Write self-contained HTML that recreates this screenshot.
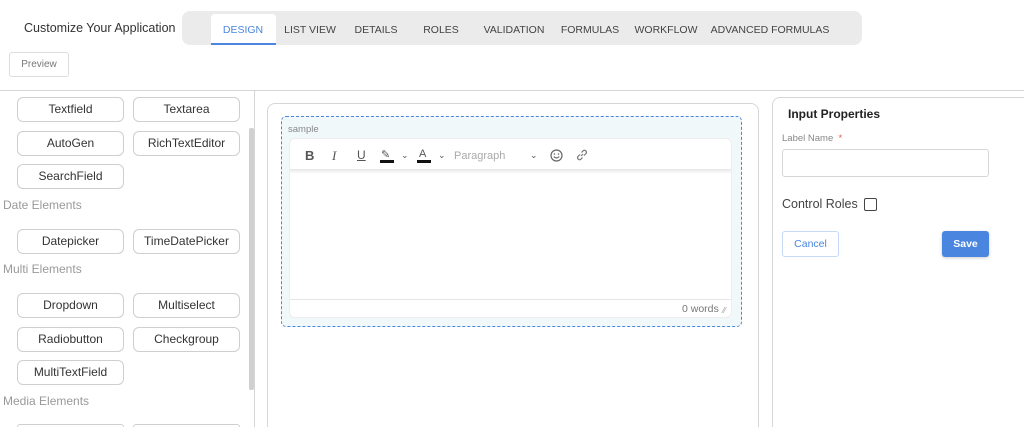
<!DOCTYPE html>
<html><head><style>
*{box-sizing:border-box;margin:0;padding:0}
html,body{width:1024px;height:427px;overflow:hidden}
body{background:#fff;font-family:"Liberation Sans",sans-serif;color:#333;position:relative}
.a{position:absolute}
.tab{position:absolute;top:24px;font-size:10.5px;color:#444;transform:translateX(-50%);white-space:nowrap}
.btn{position:absolute;width:107px;height:25px;border:1px solid #cfcfcf;border-radius:6px;font-size:12px;color:#333;text-align:center;line-height:23px;background:#fff}
.sec{position:absolute;left:3px;font-size:12px;color:#999}
.ic{position:absolute;top:148px;font-size:13px;color:#555}
</style></head><body>
<div class="a" style="left:24px;top:21px;font-size:12.5px;color:#333">Customize Your Application</div>
<div class="a" style="left:182px;top:11px;width:680px;height:34px;background:#ebebeb;border-radius:8px"></div>
<div class="a" style="left:211px;top:14px;width:65px;height:31px;background:#fff;border-radius:4px 4px 0 0;border-bottom:2px solid #4a86e0"></div>
<div class="tab" style="left:243px;color:#4a86e0">DESIGN</div>
<div class="tab" style="left:310px">LIST VIEW</div>
<div class="tab" style="left:376px">DETAILS</div>
<div class="tab" style="left:441px">ROLES</div>
<div class="tab" style="left:514px">VALIDATION</div>
<div class="tab" style="left:590px">FORMULAS</div>
<div class="tab" style="left:666px">WORKFLOW</div>
<div class="tab" style="left:770px">ADVANCED FORMULAS</div>
<div class="a" style="left:9px;top:52px;width:60px;height:25px;border:1px solid #ddd;border-radius:3px;font-size:10px;color:#777;text-align:center;line-height:23px">Preview</div>
<div class="a" style="left:0;top:90px;width:1024px;height:1px;background:#d6d6d6"></div>
<div class="a" style="left:254px;top:91px;width:1px;height:336px;background:#d6d6d6"></div>
<div class="a" style="left:249px;top:128px;width:5px;height:262px;background:#d0d0d0;border-radius:2px"></div>

<div class="btn" style="left:17px;top:97px">Textfield</div>
<div class="btn" style="left:133px;top:97px">Textarea</div>
<div class="btn" style="left:17px;top:131px">AutoGen</div>
<div class="btn" style="left:133px;top:131px">RichTextEditor</div>
<div class="btn" style="left:17px;top:164px">SearchField</div>
<div class="sec" style="top:198px">Date Elements</div>
<div class="btn" style="left:17px;top:229px">Datepicker</div>
<div class="btn" style="left:133px;top:229px">TimeDatePicker</div>
<div class="sec" style="top:262px">Multi Elements</div>
<div class="btn" style="left:17px;top:293px">Dropdown</div>
<div class="btn" style="left:133px;top:293px">Multiselect</div>
<div class="btn" style="left:17px;top:327px">Radiobutton</div>
<div class="btn" style="left:133px;top:327px">Checkgroup</div>
<div class="btn" style="left:17px;top:360px">MultiTextField</div>
<div class="sec" style="top:394px">Media Elements</div>
<div class="a" style="left:17px;top:424px;width:107px;height:3px;border:1px solid #cfcfcf;border-bottom:none;border-radius:6px 6px 0 0"></div>
<div class="a" style="left:133px;top:424px;width:107px;height:3px;border:1px solid #cfcfcf;border-bottom:none;border-radius:6px 6px 0 0"></div>

<div class="a" style="left:267px;top:103px;width:492px;height:324px;border:1px solid #d6d6d6;border-bottom:none;border-radius:8px 8px 0 0"></div>
<div class="a" style="left:281px;top:116px;width:461px;height:211px;border:1px dashed #4a86e0;border-radius:5px;background:#f1f8fa"></div>
<div class="a" style="left:288px;top:124px;font-size:9.5px;color:#888">sample</div>
<div class="a" style="left:289px;top:138px;width:443px;height:180px;background:#fff;border-radius:6px;border:1px solid #eee"></div>
<div class="a" style="left:290px;top:169px;width:441px;height:5px;background:linear-gradient(#e6e6e6,#fff)"></div>
<div class="a" style="left:290px;top:299px;width:441px;height:1px;background:#e6e6e6"></div>
<div class="ic" style="left:305px;font-weight:bold">B</div>
<div class="ic" style="left:332px;font-family:'Liberation Serif',serif;font-style:italic">I</div>
<div class="ic" style="left:357px;text-decoration:underline;font-size:12px">U</div>
<div class="a" style="left:381px;top:148px;font-size:11px;color:#555">✎</div>
<div class="a" style="left:380px;top:160px;width:14px;height:3px;background:#111"></div>
<div class="ic" style="left:401px;font-size:9px;top:150px">⌄</div>
<div class="ic" style="left:419px;font-size:11px;">A</div>
<div class="a" style="left:417px;top:160px;width:14px;height:3px;background:#111"></div>
<div class="ic" style="left:438px;font-size:9px;top:150px">⌄</div>
<div class="a" style="left:454px;top:150px;font-size:11px;color:#aaa">Paragraph</div>
<div class="ic" style="left:530px;font-size:9px;top:150px">⌄</div>
<svg class="a" style="left:550px;top:149px" width="13" height="13" viewBox="0 0 13 13"><circle cx="6.5" cy="6.5" r="5.5" fill="none" stroke="#666" stroke-width="1.2"/><circle cx="4.5" cy="5" r=".8" fill="#666"/><circle cx="8.5" cy="5" r=".8" fill="#666"/><path d="M3.8 7.5Q6.5 10.5 9.2 7.5" fill="none" stroke="#666" stroke-width="1.2"/></svg>
<svg class="a" style="left:575px;top:148px" width="14" height="14" viewBox="0 0 14 14"><path d="M6 8L8 6M5 6.5L3 8.5a2 2 0 0 0 2.8 2.8L7.5 9.5M9 7.5l2-2A2 2 0 0 0 8.2 2.7L6.5 4.5" fill="none" stroke="#777" stroke-width="1.2"/></svg>
<div class="a" style="left:682px;top:303px;font-size:10.5px;color:#777">0 words</div>
<div class="a" style="left:723px;top:306px;font-size:8px;color:#999">⁄⁄</div>

<div class="a" style="left:772px;top:97px;width:252px;height:330px;border:1px solid #d6d6d6;border-right:none;border-bottom:none;border-radius:8px 0 0 0"></div>
<div class="a" style="left:788px;top:107px;font-size:12px;font-weight:bold;color:#222">Input Properties</div>
<div class="a" style="left:782px;top:133px;font-size:9.5px;color:#888">Label Name&nbsp; <span style="color:#e55">*</span></div>
<div class="a" style="left:782px;top:149px;width:207px;height:28px;border:1px solid #d6d6d6;border-radius:3px"></div>
<div class="a" style="left:782px;top:197px;font-size:12.5px;color:#444">Control Roles</div>
<div class="a" style="left:864px;top:198px;width:13px;height:13px;border:1.5px solid #444;border-radius:2px"></div>
<div class="a" style="left:782px;top:231px;width:57px;height:26px;border:1px solid #c9d9f5;border-radius:3px;font-size:10.5px;color:#4a86e0;text-align:center;line-height:24px">Cancel</div>
<div class="a" style="left:942px;top:231px;width:47px;height:26px;background:#4a86e0;border-radius:3px;font-size:10.5px;color:#fff;font-weight:bold;text-align:center;line-height:26px;box-shadow:0 1px 3px rgba(0,0,0,.2)">Save</div>
</body></html>
